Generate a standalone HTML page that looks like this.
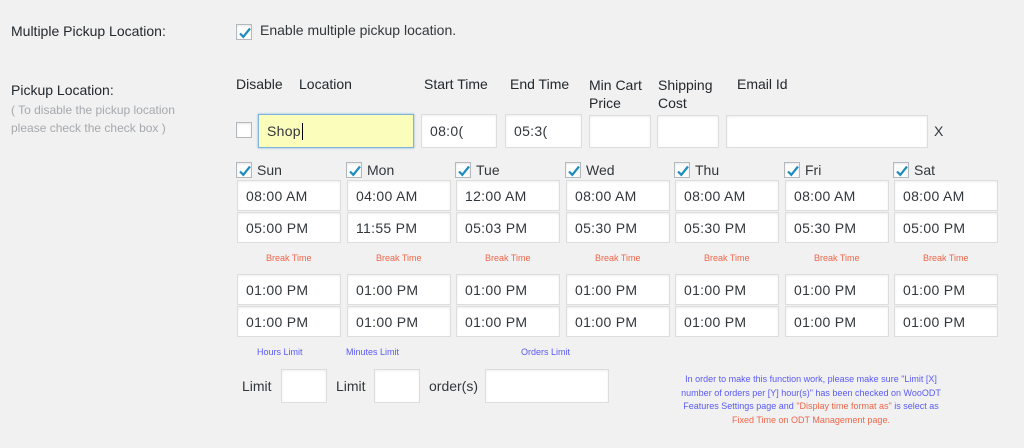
<!DOCTYPE html>
<html><head><meta charset="utf-8"><style>
*{box-sizing:border-box;margin:0;padding:0}
body{width:1024px;height:448px;background:#f1f1f1;font-family:"Liberation Sans",sans-serif;color:#23282d;position:relative;overflow:hidden}
.a{position:absolute;white-space:nowrap}
.t{font-size:14px;color:#32373c}
.lb{font-size:14px;color:#23282d;font-weight:500}
.in{position:absolute;background:#fff;border:1px solid #ddd;box-shadow:inset 0 1px 2px rgba(0,0,0,.07);font-size:14px;color:#32373c;padding-left:8px;display:flex;align-items:center;overflow:hidden;white-space:nowrap;letter-spacing:.3px}
.cb{position:absolute;width:16px;height:16px;background:#fff;border:1px solid #b4b9be;box-shadow:inset 0 1px 2px rgba(0,0,0,.1)}
.cb svg{position:absolute;left:0;top:0}
.br{font-size:9px;color:#f0664a}
.bl{font-size:9px;color:#5a5af5}
</style></head><body>
<div class="a lb" style="left:11px;top:23px">Multiple Pickup Location:</div>
<div class="cb" style="left:236px;top:24px"><svg width="16" height="16"><path d="M3 8.5 L6.3 11.8 L13 3.5" stroke="#1e8cbe" stroke-width="2.2" fill="none"/></svg></div>
<div class="a t" style="left:260px;top:22px">Enable multiple pickup location.</div>
<div class="a lb" style="left:11px;top:82px">Pickup Location:</div>
<div class="a" style="left:11px;top:101px;font-size:12px;color:#a5a9ad;line-height:18px">( To disable the pickup location<br>please check the check box )</div>
<div class="a lb" style="left:236px;top:76px">Disable</div>
<div class="a lb" style="left:299px;top:76px">Location</div>
<div class="a lb" style="left:424px;top:76px">Start Time</div>
<div class="a lb" style="left:510px;top:76px">End Time</div>
<div class="a lb" style="left:589px;top:76px;line-height:18px">Min Cart<br>Price</div>
<div class="a lb" style="left:658px;top:76px;line-height:18px">Shipping<br>Cost</div>
<div class="a lb" style="left:737px;top:76px">Email Id</div>
<div class="cb" style="left:236px;top:122px"></div>
<div class="in" style="left:258px;top:114px;width:156px;height:34px;background:#fbfdbb;border-color:#7fb2dd;box-shadow:0 0 2px rgba(30,140,190,.6)">Shop<span style="display:inline-block;width:1px;height:17px;background:#000;margin-left:1px"></span></div>
<div class="in" style="left:421px;top:114px;width:76px;height:34px">08:0(</div>
<div class="in" style="left:505px;top:114px;width:77px;height:34px">05:3(</div>
<div class="in" style="left:589px;top:115px;width:62px;height:33px"></div>
<div class="in" style="left:657px;top:115px;width:62px;height:33px"></div>
<div class="in" style="left:726px;top:115px;width:202px;height:33px"></div>
<div class="a t" style="left:934px;top:123px">X</div>
<div id="days"></div>
<div class="a bl" style="left:257px;top:347px">Hours Limit</div>
<div class="a bl" style="left:346px;top:347px">Minutes Limit</div>
<div class="a bl" style="left:521px;top:347px">Orders Limit</div>
<div class="a t" style="left:242px;top:378px">Limit</div>
<div class="in" style="left:281px;top:369px;width:46px;height:34px"></div>
<div class="a t" style="left:336px;top:378px">Limit</div>
<div class="in" style="left:374px;top:369px;width:46px;height:34px"></div>
<div class="a t" style="left:429px;top:378px">order(s)</div>
<div class="in" style="left:485px;top:369px;width:124px;height:34px"></div>
<div class="a" style="left:672px;top:373px;width:278px;text-align:center;font-size:9px;line-height:13.7px;color:#5a5af5;white-space:normal">In order to make this function work, please make sure "Limit [X] number of orders per [Y] hour(s)" has been checked on WooODT Features Settings page and <span style="color:#f0664a">"Display time format as"</span> is select as <span style="color:#f0664a">Fixed Time on ODT Management page.</span></div>
<script>
var d=["Sun","Mon","Tue","Wed","Thu","Fri","Sat"],o=["08:00 AM","04:00 AM","12:00 AM","08:00 AM","08:00 AM","08:00 AM","08:00 AM"],c=["05:00 PM","11:55 PM","05:03 PM","05:30 PM","05:30 PM","05:30 PM","05:00 PM"],h="";
for(var i=0;i<7;i++){var x=Math.round(237+i*109.5);
h+='<div class="cb" style="left:'+(x-1)+'px;top:162px"><svg width="16" height="16"><path d="M3 8.5 L6.3 11.8 L13 3.5" stroke="#1e8cbe" stroke-width="2.2" fill="none"/></svg></div>';
h+='<div class="a t" style="left:'+(x+20)+'px;top:162px">'+d[i]+'</div>';
h+='<div class="in" style="left:'+x+'px;top:180px;width:104px;height:31px">'+o[i].replace("AM","A<span style=\'letter-spacing:-3px\'>M</span>")+'</div>';
h+='<div class="in" style="left:'+x+'px;top:212px;width:104px;height:31px">'+c[i]+'</div>';
h+='<div class="a br" style="left:'+(x+29)+'px;top:253px">Break Time</div>';
h+='<div class="in" style="left:'+x+'px;top:274px;width:104px;height:31px">01:00 PM</div>';
h+='<div class="in" style="left:'+x+'px;top:306px;width:104px;height:31px">01:00 PM</div>';}
document.getElementById("days").innerHTML=h;
</script>
</body></html>
